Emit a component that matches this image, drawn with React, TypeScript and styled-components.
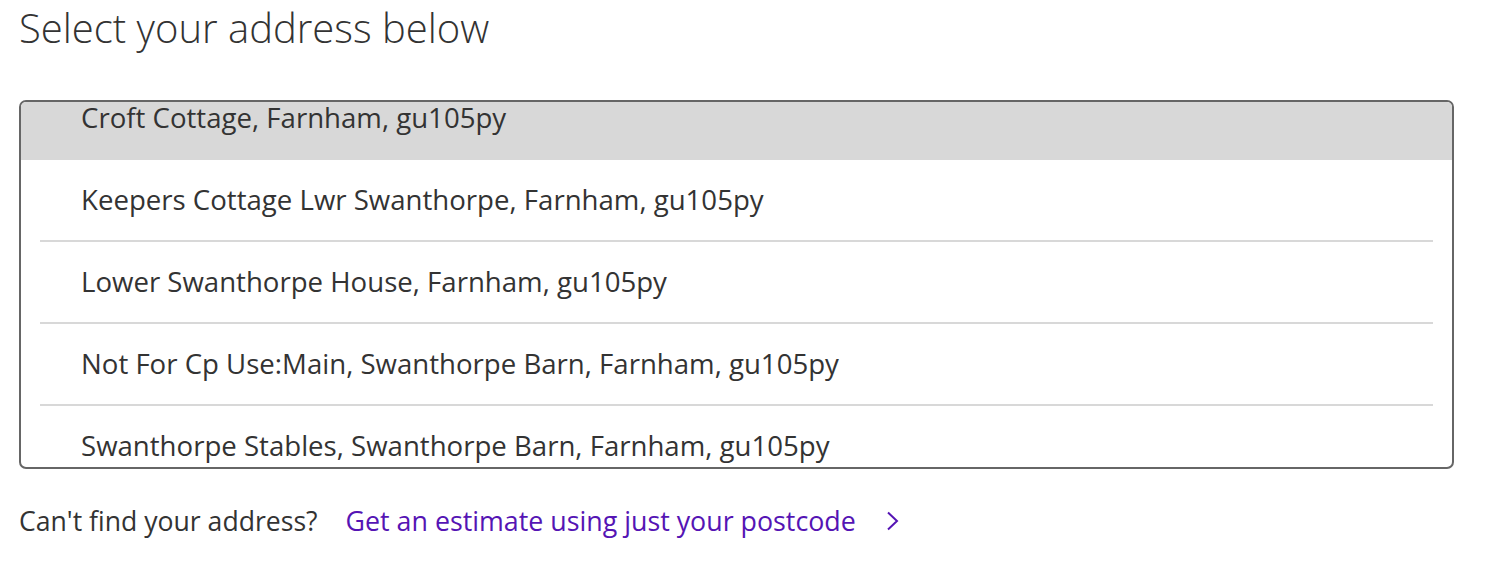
import React, { useEffect, useRef } from 'react'
import styled, { createGlobalStyle } from 'styled-components'

const addresses = [
    'Croft Cottage, Farnham, gu105py',
    'Keepers Cottage Lwr Swanthorpe, Farnham, gu105py',
    'Lower Swanthorpe House, Farnham, gu105py',
    'Not For Cp Use:Main, Swanthorpe Barn, Farnham, gu105py',
    'Swanthorpe Stables, Swanthorpe Barn, Farnham, gu105py',
    'The Barn, Swanthorpe Barn, Farnham, gu105py',
]

const GlobalStyle = createGlobalStyle`
    body {
        margin: 0;
        background: #fff;
        font-family: "Open Sans", "Liberation Sans", sans-serif;
        color: #333;
    }
`

export default function App() {
    const listRef = useRef<HTMLDivElement>(null)

    // the list is shown scrolled a little, as in the reference
    useEffect(() => {
        if (listRef.current) listRef.current.scrollTop = 24
    }, [])

    return (
        <Page>
            <GlobalStyle/>
            <Title>Select your address below</Title>
            <ListBox ref={listRef}>
                {addresses.map((a, i) => (
                    <Row key={a} selected={i === 0}>
                        <RowText>{a}</RowText>
                    </Row>
                ))}
            </ListBox>
            <Footer>
                <Question>Can't find your address?</Question>
                <Link href="#">
                    <span>Get an estimate using just your postcode</span>
                    <Chevron width="15" height="22" viewBox="0 0 15 22">
                        <path d="M3 2.5l9 8.5-9 8.5" fill="none" stroke="currentColor" strokeWidth="2"/>
                    </Chevron>
                </Link>
            </Footer>
        </Page>
    )
}

const Page = styled.div`
    padding: 0 32px 0 19px;
`

const Title = styled.h1`
    margin: 0;
    font-size: 40px;
    font-weight: 300;
    line-height: 56px;
    color: #333;
`

const ListBox = styled.div`
    margin-top: 44px;
    height: 365px;
    border: 2px solid #666;
    border-radius: 7px;
    overflow: hidden;
`

const Row = styled.div<{selected?: boolean}>`
    position: relative;
    height: 82px;
    box-sizing: border-box;
    display: flex;
    align-items: center;
    padding: 0 0 5px 60px;
    background: ${(p) => (p.selected ? '#d8d8d8' : 'transparent')};
    cursor: pointer;

    &::after {
        content: '';
        position: absolute;
        left: 19px;
        right: 19px;
        bottom: 0;
        height: 2px;
        background: #d8d8d8;
    }
`

const RowText = styled.span`
    font-size: 27.6px;
    color: #333;
`

const Footer = styled.div`
    display: flex;
    align-items: center;
    margin-top: 33px;
    font-size: 26.6px;
`

const Question = styled.span`
    color: #333;
`

const Link = styled.a`
    display: flex;
    align-items: center;
    margin-left: 28px;
    font-size: 26.8px;
    color: #5514b4;
    text-decoration: none;
`

const Chevron = styled.svg`
    margin-left: 29px;
`
